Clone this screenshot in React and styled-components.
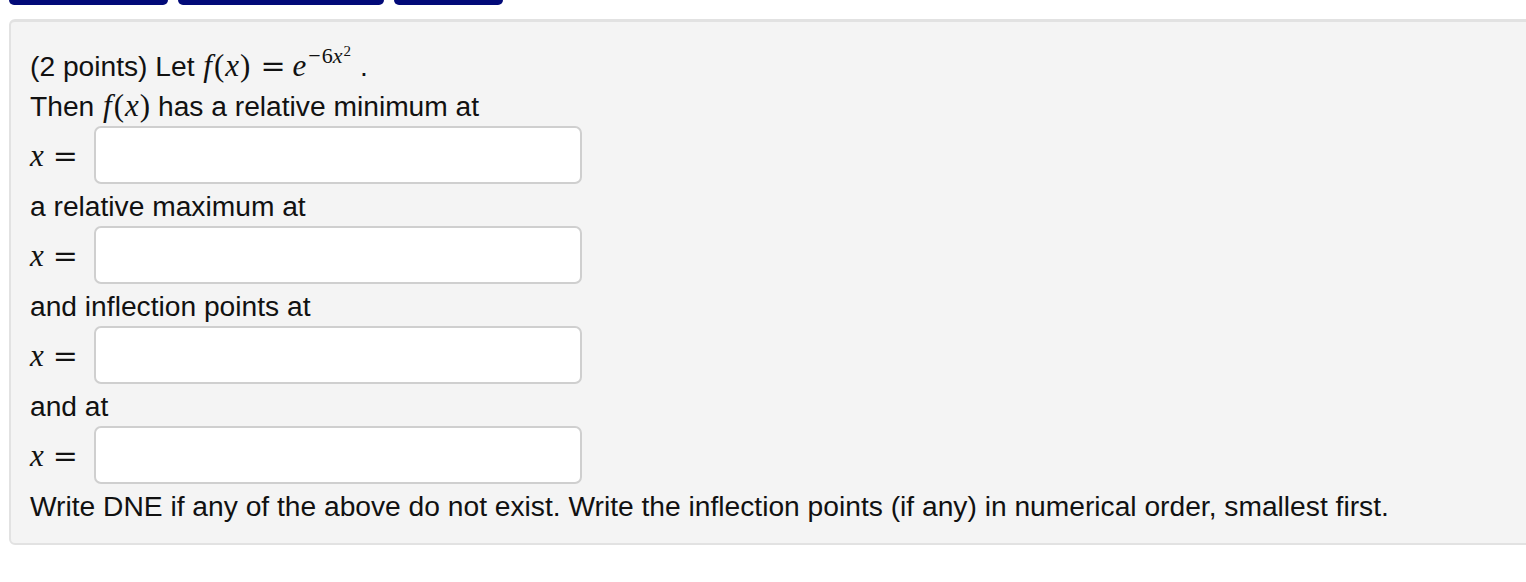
import React from "react";
import styled, { createGlobalStyle } from "styled-components";

const Global = createGlobalStyle`
  html, body { margin: 0; padding: 0; background: #fff; }
  body { overflow: hidden; font-family: "Liberation Sans", Arial, sans-serif; color: #111; }
`;

const Page = styled.div`
  width: 1526px;
  height: 582px;
  overflow: hidden;
`;

const ButtonRow = styled.div`
  display: flex;
  gap: 10px;
  padding-left: 9px;
  height: 5px;
`;

const TabButton = styled.div`
  width: ${(p) => p.$w}px;
  height: 5px;
  background: #020a78;
  border-radius: 0 0 8px 8px;
`;

const Panel = styled.div`
  margin: 14px 0 0 9px;
  width: 1540px;
  height: 526px;
  box-sizing: border-box;
  background: #f4f4f4;
  border: 2px solid #e2e2e2;
  border-top-width: 3px;
  border-radius: 6px;
  padding: 24px 19px 18px 19px;
`;

const Line = styled.div`
  font-size: 28.2px;
  line-height: 40px;
  height: 40px;
  white-space: nowrap;
`;

const Var = styled.span`
  font-family: "Liberation Serif", "Times New Roman", serif;
  font-size: ${(p) => p.$size || 31}px;
  font-style: italic;
  margin: 0 ${(p) => p.$mr || 0}px 0 ${(p) => p.$ml || 0}px;
`;

const Op = styled.span`
  font-family: "Liberation Serif", "Times New Roman", serif;
  font-size: ${(p) => p.$size || 31}px;
  margin: 0 ${(p) => p.$mr || 0}px 0 ${(p) => p.$ml || 0}px;
`;

const Eq = styled.span`
  display: inline-block;
  font-family: "DejaVu Serif", serif;
  font-size: 30px;
  margin: 0 ${(p) => p.$mr || 0}px 0 ${(p) => p.$ml || 0}px;
`;

const Sup = styled.span`
  display: inline-block;
  position: relative;
  top: -13px;
  margin-left: 2px;
  line-height: 0;
`;

const SupSup = styled.span`
  display: inline-block;
  position: relative;
  top: -7px;
  margin-left: 1px;
  font-family: "Liberation Serif", "Times New Roman", serif;
  font-size: 15px;
  line-height: 0;
`;

const Period = styled.span`
  margin-left: 9px;
`;

const AnswerRow = styled.div`
  display: flex;
  align-items: center;
  height: 58px;
  margin-bottom: 2px;
`;

const XLabel = styled.div`
  width: 64px;
  white-space: nowrap;
  line-height: 1;
`;

const Answer = styled.input`
  width: 488px;
  height: 58px;
  box-sizing: border-box;
  border: 2px solid #cfcfcf;
  border-radius: 7px;
  background: #fff;
  outline: none;
  font-size: 24px;
  padding: 0 10px;
`;

function FofX() {
  return (
    <>
      <Var $ml={1} $mr={2}>f</Var>
      <Op>(</Op>
      <Var $ml={1} $mr={1}>x</Var>
      <Op>)</Op>
    </>
  );
}

function Row() {
  return (
    <AnswerRow>
      <XLabel>
        <Var>x</Var>
        <Eq $ml={9}>=</Eq>
      </XLabel>
      <Answer type="text" />
    </AnswerRow>
  );
}

export default function App() {
  return (
    <Page>
      <Global />
      <ButtonRow>
        <TabButton $w={159} />
        <TabButton $w={206} />
        <TabButton $w={109} />
      </ButtonRow>
      <Panel>
        <Line>
          (2 points) Let <FofX />
          <Eq $ml={10} $mr={7}>=</Eq>
          <Var>e</Var>
          <Sup>
            <Op $size={22} $mr={1}>−</Op>
            <Op $size={22}>6</Op>
            <Var $size={22}>x</Var>
            <SupSup>2</SupSup>
          </Sup>
          <Period>.</Period>
        </Line>
        <Line>
          Then <FofX /> has a relative minimum at
        </Line>
        <Row />
        <Line>a relative maximum at</Line>
        <Row />
        <Line>and inflection points at</Line>
        <Row />
        <Line>and at</Line>
        <Row />
        <Line>
          Write DNE if any of the above do not exist. Write the inflection points (if any) in numerical order, smallest first.
        </Line>
      </Panel>
    </Page>
  );
}
